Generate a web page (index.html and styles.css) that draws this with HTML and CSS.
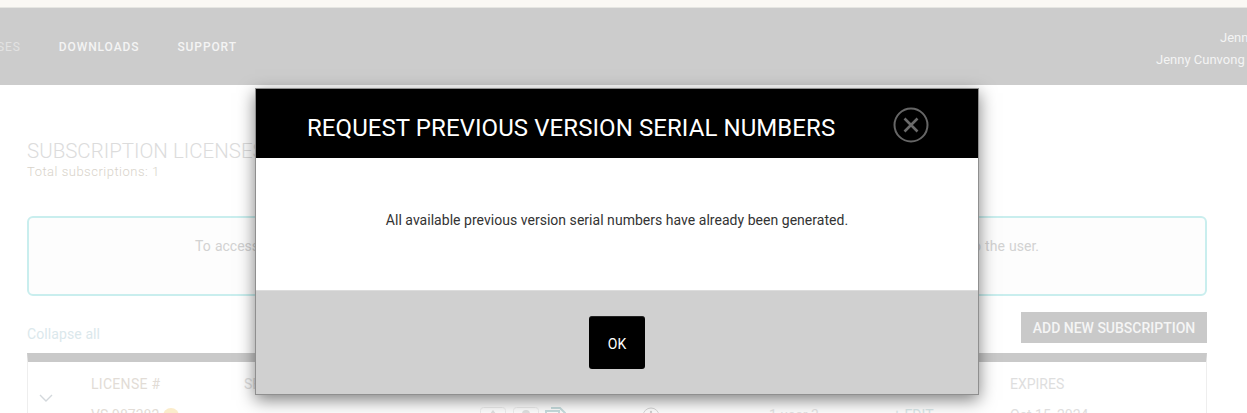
FILE: index.html
```html
<!DOCTYPE html>
<html lang="en">
<head>
<meta charset="utf-8">
<title>Subscription Licenses</title>
<link rel="stylesheet" href="styles.css">
</head>
<body>
<div class="strip"></div>
<header class="topbar">
  <nav class="nav">
    <a class="nav-dim">LICENSES</a>
    <a>DOWNLOADS</a>
    <a>SUPPORT</a>
  </nav>
  <div class="user">
    <div class="user-first">Jenny</div>
    <div>Jenny Cunvong</div>
  </div>
</header>
<main class="main">
  <h1 class="title">SUBSCRIPTION LICENSES</h1>
  <p class="subtitle">Total subscriptions: 1</p>
  <div class="notice">To access previous version serial numbers for a subscription, request them from the license details and assign the license to the user.</div>
  <div class="actions">
    <a class="collapse">Collapse all</a>
    <button class="add">ADD NEW SUBSCRIPTION</button>
  </div>
  <section class="table">
    <div class="row head">
      <span class="c-chev"></span>
      <span class="c-lic">LICENSE #</span>
      <span class="c-ser">SERIAL #</span>
      <span class="c-exp">EXPIRES</span>
    </div>
    <svg class="chev" width="14" height="8" viewBox="0 0 14 8"><path d="M1 1l6 6 6-6" fill="none" stroke="#d3d8dc" stroke-width="1.4"/></svg>
    <div class="row body-row">
      <span class="c-chev"></span>
      <span class="c-lic">VS-987382<i class="dot"></i></span>
      <span class="c-ser2">
        <svg class="ibox" width="26" height="26" viewBox="0 0 26 26"><rect x=".5" y=".5" width="25" height="25" rx="3" fill="none" stroke="#eee"/><path d="M9 8l4-5 4 5z" fill="#e2e2e2"/></svg>
        <svg class="ibox" width="26" height="26" viewBox="0 0 26 26"><rect x=".5" y=".5" width="25" height="25" rx="3" fill="none" stroke="#eee"/><circle cx="13" cy="7" r="4" fill="#e2e2e2"/></svg>
        <svg class="idoc" width="21" height="26" viewBox="0 0 21 26"><path d="M1 4h13v20H1zM6 1h9l5 5v14" fill="none" stroke="#c8dedf" stroke-width="2"/></svg>
      </span>
      <span class="c-info"><svg class="circle" width="18" height="18" viewBox="0 0 18 18"><circle cx="9" cy="9" r="8" fill="none" stroke="#d8d8d8"/><circle cx="9" cy="5" r="1.2" fill="#d0d0d0"/></svg></span>
      <span class="c-count">1 user 3</span>
      <span class="c-edit">+ EDIT</span>
      <span class="c-exp">Oct 15, 2024</span>
    </div>
  </section>
</main>
<div class="modal">
  <div class="modal-head">
    <h2 class="modal-title">REQUEST PREVIOUS VERSION SERIAL NUMBERS</h2>
    <svg class="close" width="36" height="36" viewBox="0 0 36 36"><circle cx="18" cy="18" r="16.5" fill="none" stroke="#666" stroke-width="2"/><path d="M11.5 11.5l13 13M24.5 11.5l-13 13" fill="none" stroke="#6a6a6a" stroke-width="2.6"/></svg>
  </div>
  <div class="modal-body">All available previous version serial numbers have already been generated.</div>
  <div class="modal-foot"><button class="ok">OK</button></div>
</div>
</body>
</html>
```

FILE: styles.css
```css
* { box-sizing: border-box; }
html, body { margin: 0; padding: 0; height: 413px; overflow: hidden; background: #fff; }
body { font-family: "Roboto", "Liberation Sans", sans-serif; position: relative; }
.strip { height: 8px; background: #faf8f4; border-bottom: 1px solid #e6e6e2; }
.topbar { height: 77px; background: #ccc; display: flex; justify-content: space-between; color: #f4f4f4; white-space: nowrap; }
.nav { display: flex; gap: 38px; margin-left: -40.4px; padding-top: 31px; font-size: 12px; font-weight: 500; letter-spacing: .9px; line-height: 16px; }
.nav-dim { color: #e2e2e2; font-weight: 400; }
.user { width: 91px; font-size: 13px; line-height: 22px; padding-top: 19px; overflow: visible; }
.user-first { padding-left: 64px; }
.main { padding: 0 40px 0 27px; }
.title { margin: 0; padding-top: 55px; font-size: 20.5px; line-height: 22px; font-weight: 300; color: #dcdcdc; }
.subtitle { margin: 0; font-size: 13px; line-height: 20px; font-weight: 300; color: #d8d3ca; letter-spacing: .5px; }
.notice { margin-top: 34px; height: 80px; border: 2px solid #c9eeee; border-radius: 6px; background: #fdfdfd; color: #d2d2d2; font-size: 14px; text-align: center; padding-top: 18px; line-height: 20px; word-spacing: .73px; white-space: nowrap; overflow: hidden; }
.actions { display: flex; justify-content: space-between; align-items: flex-end; margin-top: 16px; height: 31px; }
.collapse { font-size: 14px; line-height: 16px; color: #dbe8ec; letter-spacing: .1px; position: relative; top: -1px; }
.add { width: 186px; height: 31px; border: 0; background: #c9c9c9; color: #f5f5f5; font: 500 14px/31px "Roboto", sans-serif; padding: 1px 0 0; }
.table { position: relative; margin-top: 10px; border: 1px solid #eee; border-top: 9px solid #c9c9c9; height: 80px; }
.row { display: flex; white-space: nowrap; font-size: 14px; color: #dedede; }
.head { padding-top: 14px; line-height: 16px; }
.head .c-lic { letter-spacing: .3px; }
.body-row { padding-top: 15px; line-height: 16px; color: #e4e4e4; }
.c-chev { width: 63px; flex: none; }
.c-lic { width: 153px; flex: none; color: #e2dcd6; }
.c-ser { width: 766px; flex: none; }
.c-exp { color: #dedede; }
.chev { position: absolute; left: 11px; top: 32px; }
.dot { display: inline-block; width: 16px; height: 16px; border-radius: 50%; background: #fbeccb; margin: 1px 0 0 4px; vertical-align: top; }
.c-ser2 { width: 398px; flex: none; display: flex; gap: 7px; padding-left: 236px; }
.ibox, .idoc { display: block; flex: none; }
.idoc { margin-left: -1px; }
.c-info { width: 127px; flex: none; }
.circle { display: block; }
.c-count { width: 124px; flex: none; }
.c-edit { width: 117px; flex: none; color: #d9e8e9; }
.modal { position: absolute; left: 255px; top: 88px; width: 724px; height: 307px; border: 1px solid #8f8f8f; box-shadow: 0 5px 16px rgba(0, 0, 0, .5); background: #fff; }
.modal-head { height: 69px; background: #000; display: flex; align-items: flex-start; padding: 18px 0 0 51px; color: #fff; }
.modal-title { margin: 0; width: 587px; font-size: 24px; line-height: 43px; font-weight: 400; letter-spacing: .08px; white-space: nowrap; }
.close { flex: none; margin-left: -1px; }
.modal-body { height: 132px; padding-top: 53px; text-align: center; font-size: 14px; line-height: 18px; color: #333; letter-spacing: .03px; }
.modal-foot { height: 104px; background: #d0d0d0; border-top: 1px solid #dcdcdc; display: flex; justify-content: center; padding-top: 25px; }
.ok { width: 56px; height: 53px; border: 0; border-top: 1px solid #222; border-radius: 3px; background: #000; color: #fff; font: 400 14px "Roboto", sans-serif; padding: 2px 0 0; }
```
